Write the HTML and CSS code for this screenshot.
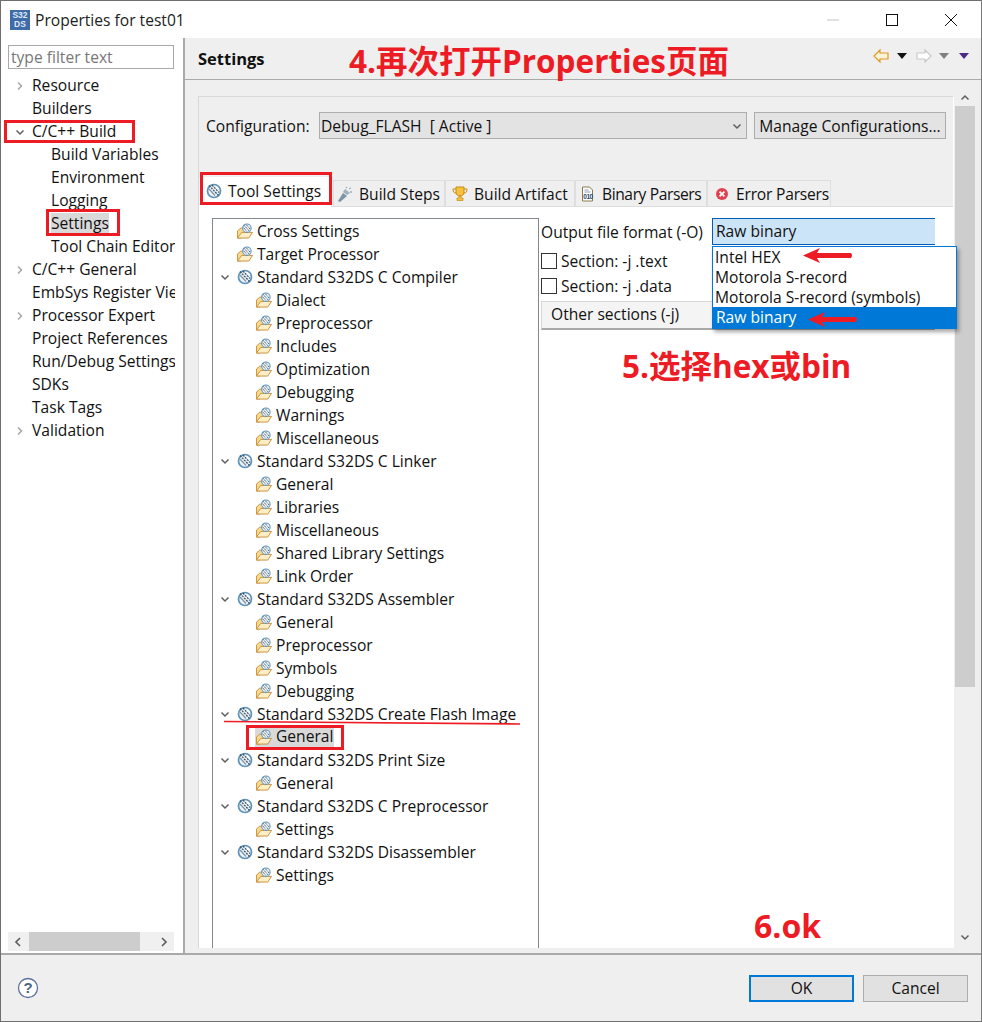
FILE: index.html
```html
<!DOCTYPE html>
<html lang="en">
<head>
    <meta charset="UTF-8">
    <meta name="viewport" content="width=device-width, initial-scale=1.0">
    <title>Properties for test01</title>
    <link rel="stylesheet" href="styles.css">
</head>
<body>
    <svg class="defs" width="0" height="0">
        <symbol id="tool" viewBox="0 0 16 16">
            <circle cx="8" cy="8" r="6.500" fill="#eef3f8" stroke="#5f93b8" stroke-width="1.700"/>
            <path d="M3 2.500l9.500 10M6 2l7 7.500" stroke="#3d5468" stroke-width="1.300" fill="none" stroke-dasharray="2 1"/>
            <path d="M3 6l6 6.500" stroke="#7d93a6" stroke-width="1.200" fill="none"/>
            <path d="M10 3.500l2.500 2.500" stroke="#fff" stroke-width="1.400"/>
        </symbol>
        <symbol id="folder" viewBox="0 0 17 16">
            <path d="M.5 8L4 5h6v3l-6 7.500H.5z" fill="#f9d98f" stroke="#c98f36"/>
            <path d="M.5 15.500L5 9.500h11.500L12.500 15.500z" fill="#fdeec6" stroke="#c98f36"/>
            <circle cx="10.500" cy="5" r="4.500" fill="#eef3f8" stroke="#5f93b8" stroke-width="1.100"/>
            <path d="M7.500 2l5.500 6M10 1.500l4 4.500M7 4.500l3.500 4" stroke="#3d5468" stroke-width="1" fill="none" stroke-dasharray="1.500 .7"/>
        </symbol>
        <symbol id="open" viewBox="0 0 10 10">
            <path d="M1.500 3.500L5 7l3.500-3.500" fill="none" stroke="#5f5f5f" stroke-width="1.500"/>
        </symbol>
        <symbol id="closed" viewBox="0 0 10 10">
            <path d="M3 1.500L6.500 5 3 8.500" fill="none" stroke="#a6a6a6" stroke-width="1.500"/>
        </symbol>
        <symbol id="right" viewBox="0 0 10 10">
            <path d="M3 1L7 5 3 9" fill="none" stroke="#5f5f5f" stroke-width="1.700"/>
        </symbol>
        <symbol id="left" viewBox="0 0 10 10">
            <path d="M7 1L3 5l4 4" fill="none" stroke="#5f5f5f" stroke-width="1.700"/>
        </symbol>
    </svg>

    <div class="dialog">
        <header class="titlebar">
            <div class="app-icon"><span>S32</span><span>DS</span></div>
            <span class="title">Properties for test01</span>
            <div class="win-btns">
                <svg width="12" height="12" viewBox="0 0 12 12"><path d="M0 6h12" stroke="#c4c4c4"/></svg>
                <svg width="12" height="12" viewBox="0 0 12 12"><rect x=".5" y=".5" width="11" height="11" fill="none" stroke="#111"/></svg>
                <svg width="12" height="12" viewBox="0 0 12 12"><path d="M0 0l12 12M12 0L0 12" stroke="#111"/></svg>
            </div>
        </header>

        <div class="main">
            <aside class="side">
                <input class="filter" type="text" placeholder="type filter text">
                <ul class="nav">
                    <li><svg class="chev"><use href="#closed"/></svg>Resource</li>
                    <li><span class="chev"></span>Builders</li>
                    <li><svg class="chev"><use href="#open"/></svg>C/C++ Build</li>
                    <li class="sub">Build Variables</li>
                    <li class="sub">Environment</li>
                    <li class="sub">Logging</li>
                    <li class="sub"><span class="picked">Settings</span></li>
                    <li class="sub">Tool Chain Editor</li>
                    <li><svg class="chev"><use href="#closed"/></svg>C/C++ General</li>
                    <li><span class="chev"></span>EmbSys Register View</li>
                    <li><svg class="chev"><use href="#closed"/></svg>Processor Expert</li>
                    <li><span class="chev"></span>Project References</li>
                    <li><span class="chev"></span>Run/Debug Settings</li>
                    <li><span class="chev"></span>SDKs</li>
                    <li><span class="chev"></span>Task Tags</li>
                    <li><svg class="chev"><use href="#closed"/></svg>Validation</li>
                </ul>
                <div class="hscroll">
                    <svg width="10" height="10"><use href="#left"/></svg>
                    <div class="hthumb"></div>
                    <svg width="10" height="10"><use href="#right"/></svg>
                </div>
            </aside>

            <section class="content">
                <div class="page-head">
                    <h2>Settings</h2>
                    <div class="history">
                        <svg width="16" height="14" viewBox="0 0 16 14"><path d="M7 1L1 7l6 6V10h8V4H7z" fill="#fdf3d8" stroke="#dd9a28" stroke-width="1.200"/></svg>
                        <i class="tri"></i>
                        <svg class="fwd" width="16" height="14" viewBox="0 0 16 14"><path d="M9 1l6 6-6 6V10H1V4h8z" fill="#fff" stroke="#c8c8c8" stroke-width="1.200"/></svg>
                        <i class="tri grey"></i>
                        <i class="tri purple"></i>
                    </div>
                </div>
                <div class="page-body">
                    <div class="pane">
                        <div class="config">
                            <label>Configuration:</label>
                            <div class="select">Debug_FLASH&nbsp; [ Active ]
                                <svg width="10" height="10"><use href="#open"/></svg>
                            </div>
                            <button class="manage">Manage Configurations...</button>
                        </div>
                        <div class="tabs">
                            <div class="tab active"><svg class="ic"><use href="#tool"/></svg>Tool Settings</div>
                            <div class="tab t-steps">
                                <svg class="ic" viewBox="0 0 16 16"><path d="M1 15l5-8 4 3-7 6z" fill="#7d93a6"/><path d="M6 6l2-3 5 4-3 2z" fill="#9fb0be"/><path d="M9 2l1-1M12 3l2-1M13 6l2 0" stroke="#9fb0be" stroke-width="1.300"/></svg>Build Steps</div>
                            <div class="tab t-artifact">
                                <svg class="ic" viewBox="0 0 16 16"><path d="M4 1h8v5c0 3-2 4-4 4s-4-1-4-4z" fill="#f6c23c" stroke="#c98a12"/><path d="M4 3H1c0 3 1 4 3 4M12 3h3c0 3-1 4-3 4" fill="none" stroke="#c98a12"/><path d="M7 10h2v2h2v2.500H5V12h2z" fill="#f6c23c" stroke="#c98a12" stroke-width=".7"/></svg>Build Artifact</div>
                            <div class="tab t-binary">
                                <svg class="ic" viewBox="0 0 16 16"><path d="M2.500 1h7l3 3v11h-10z" fill="#fff" stroke="#8d7a4c"/><path d="M4.500 4h4M4.500 6h6" stroke="#8aa0b8"/><text x="8" y="13" text-anchor="middle" class="bin-text">010</text></svg>Binary Parsers</div>
                            <div class="tab t-error">
                                <svg class="ic" viewBox="0 0 16 16"><circle cx="8" cy="8" r="6" fill="#e0424f"/><path d="M5.600 5.600l4.800 4.800M10.400 5.600l-4.800 4.800" stroke="#fff" stroke-width="1.700"/></svg>Error Parsers</div>
                        </div>
                        <div class="tab-panel">
                            <ul class="tool-tree">
                                <li class="leaf"><svg class="ic"><use href="#folder"/></svg>Cross Settings</li>
                                <li class="leaf"><svg class="ic"><use href="#folder"/></svg>Target Processor</li>
                                <li class="group"><svg class="arrow"><use href="#open"/></svg><svg class="ic"><use href="#tool"/></svg>Standard S32DS C Compiler</li>
                                <li class="item"><svg class="ic"><use href="#folder"/></svg>Dialect</li>
                                <li class="item"><svg class="ic"><use href="#folder"/></svg>Preprocessor</li>
                                <li class="item"><svg class="ic"><use href="#folder"/></svg>Includes</li>
                                <li class="item"><svg class="ic"><use href="#folder"/></svg>Optimization</li>
                                <li class="item"><svg class="ic"><use href="#folder"/></svg>Debugging</li>
                                <li class="item"><svg class="ic"><use href="#folder"/></svg>Warnings</li>
                                <li class="item"><svg class="ic"><use href="#folder"/></svg>Miscellaneous</li>
                                <li class="group"><svg class="arrow"><use href="#open"/></svg><svg class="ic"><use href="#tool"/></svg>Standard S32DS C Linker</li>
                                <li class="item"><svg class="ic"><use href="#folder"/></svg>General</li>
                                <li class="item"><svg class="ic"><use href="#folder"/></svg>Libraries</li>
                                <li class="item"><svg class="ic"><use href="#folder"/></svg>Miscellaneous</li>
                                <li class="item"><svg class="ic"><use href="#folder"/></svg>Shared Library Settings</li>
                                <li class="item"><svg class="ic"><use href="#folder"/></svg>Link Order</li>
                                <li class="group"><svg class="arrow"><use href="#open"/></svg><svg class="ic"><use href="#tool"/></svg>Standard S32DS Assembler</li>
                                <li class="item"><svg class="ic"><use href="#folder"/></svg>General</li>
                                <li class="item"><svg class="ic"><use href="#folder"/></svg>Preprocessor</li>
                                <li class="item"><svg class="ic"><use href="#folder"/></svg>Symbols</li>
                                <li class="item"><svg class="ic"><use href="#folder"/></svg>Debugging</li>
                                <li class="group"><svg class="arrow"><use href="#open"/></svg><svg class="ic"><use href="#tool"/></svg>Standard S32DS Create Flash Image</li>
                                <li class="item selected"><span class="picked"><svg class="ic"><use href="#folder"/></svg>General</span></li>
                                <li class="group"><svg class="arrow"><use href="#open"/></svg><svg class="ic"><use href="#tool"/></svg>Standard S32DS Print Size</li>
                                <li class="item"><svg class="ic"><use href="#folder"/></svg>General</li>
                                <li class="group"><svg class="arrow"><use href="#open"/></svg><svg class="ic"><use href="#tool"/></svg>Standard S32DS C Preprocessor</li>
                                <li class="item"><svg class="ic"><use href="#folder"/></svg>Settings</li>
                                <li class="group"><svg class="arrow"><use href="#open"/></svg><svg class="ic"><use href="#tool"/></svg>Standard S32DS Disassembler</li>
                                <li class="item"><svg class="ic"><use href="#folder"/></svg>Settings</li>
                            </ul>
                            <div class="options">
                                <div class="format-row">
                                    <span class="format-label">Output file format (-O)</span>
                                    <div class="combo">Raw binary</div>
                                </div>
                                <label class="check"><i class="box"></i>Section: -j .text</label>
                                <label class="check second"><i class="box"></i>Section: -j .data</label>
                                <div class="other-head">Other sections (-j)</div>
                                <div class="other-body"></div>
                            </div>
                        </div>
                    </div>
                    <div class="vscroll">
                        <svg width="10" height="10" class="up"><use href="#open"/></svg>
                        <div class="vthumb"></div>
                        <svg width="10" height="10"><use href="#open"/></svg>
                    </div>
                </div>
            </section>
        </div>

        <footer class="footer">
            <svg width="22" height="22" viewBox="0 0 22 22"><circle cx="11" cy="11" r="9.500" fill="#fff" stroke="#5c739c" stroke-width="1.300"/><text x="11" y="16" text-anchor="middle" class="help-q">?</text></svg>
            <div class="actions">
                <button class="btn default">OK</button>
                <button class="btn">Cancel</button>
            </div>
        </footer>

        <!-- dropdown list, open over the form -->
        <ul class="dropdown">
            <li>Intel HEX</li>
            <li>Motorola S-record</li>
            <li>Motorola S-record (symbols)</li>
            <li class="on">Raw binary</li>
        </ul>

        <!-- red notes drawn on top of the screenshot -->
        <div class="note note4">4.再次打开Properties页面</div>
        <div class="note note5">5.选择hex或bin</div>
        <div class="note note6">6.ok</div>
        <div class="mark m-build"></div>
        <div class="mark m-settings"></div>
        <div class="mark m-tool"></div>
        <div class="mark m-general"></div>
        <svg class="underline" width="298" height="6"><path d="M0 1.500L296 4" stroke="#ed1c24" stroke-width="1.600"/></svg>
        <svg class="red-arrow a1" width="50" height="15" viewBox="0 0 50 15"><path d="M0 7.500L17 0l-3 5h34q2 2.500 0 5H14l3 5z" fill="#ed1c24"/></svg>
        <svg class="red-arrow a2" width="50" height="15" viewBox="0 0 50 15"><path d="M0 7.500L17 0l-3 5h34q2 2.500 0 5H14l3 5z" fill="#ed1c24"/></svg>
    </div>
</body>
</html>
```

FILE: styles.css
```css
* {
    box-sizing: border-box;
}
html, body {
    margin: 0;
    padding: 0;
}
body {
    font-family: "Open Sans", "Noto Sans", sans-serif;
    font-size: 15.6px;
    color: #111;
    background: #fff;
}
ul {
    list-style: none;
    margin: 0;
    padding: 0;
}
.defs {
    position: absolute;
}
.dialog {
    position: relative;
    width: 982px;
    height: 1022px;
    border: 1px solid #6f6f6f;
    border-right-color: #7a7a7a;
    display: flex;
    flex-direction: column;
    overflow: hidden;
    background: #fff;
}

/* Title bar */
.titlebar {
    height: 37px;
    display: flex;
    align-items: center;
    padding-left: 9px;
    flex: none;
}
.app-icon {
    width: 20px;
    height: 20px;
    background: #3f6ba8;
    color: #dfe8f5;
    font-family: "Liberation Sans", sans-serif;
    font-size: 8.500px;
    font-weight: bold;
    line-height: 9px;
    display: flex;
    flex-direction: column;
    align-items: center;
    justify-content: center;
    margin-right: 5px;
}
.title {
    color: #222;
}
.win-btns {
    margin-left: auto;
    display: flex;
    gap: 47px;
    padding-right: 24px;
}

.main {
    flex: 1;
    min-height: 0;
    display: flex;
}

/* Left navigation */
.side {
    width: 184px;
    flex: none;
    border-right: 2px solid #a9a9a9;
    padding: 7px 0 0 7px;
    display: flex;
    flex-direction: column;
    position: relative;
    overflow: hidden;
}
.filter {
    width: 166px;
    height: 24px;
    border: 1px solid #a9a9a9;
    padding: 0 2px;
    font-family: inherit;
    font-size: 15.6px;
    outline: none;
}
.filter::placeholder {
    color: #777;
}
.nav {
    margin-top: 5px;
    width: 167px;
    overflow: hidden;
    flex: 1;
}
.nav li {
    height: 23px;
    line-height: 23px;
    display: flex;
    align-items: center;
    white-space: nowrap;
    padding-left: 7px;
}
.nav .chev {
    width: 10px;
    height: 10px;
    flex: none;
    margin-right: 7px;
}
.nav .sub {
    padding-left: 43px;
}
.picked {
    background: #d9d9d9;
    display: inline-flex;
    align-items: center;
    line-height: 21px;
}
.hscroll {
    width: 166px;
    height: 19px;
    margin-bottom: 2px;
    background: #f0f0f0;
    display: flex;
    align-items: center;
    padding: 0 5px;
}
.hscroll svg {
    flex: none;
}
.hthumb {
    width: 111px;
    height: 19px;
    background: #cdcdcd;
    margin: 0 19px 0 6px;
}

/* Right side */
.content {
    flex: 1;
    min-width: 0;
    display: flex;
    flex-direction: column;
    background: #efefef;
}
.page-head {
    height: 42px;
    flex: none;
    display: flex;
    align-items: center;
    border-bottom: 1px solid #a9a9a9;
    padding: 0 12px 0 13px;
}
.page-head h2 {
    margin: 0;
    font-size: 16.500px;
    font-weight: 700;
}
.history {
    margin-left: auto;
    display: flex;
    align-items: center;
    margin-top: -5px;
}
.history .fwd {
    margin-left: 9px;
}
.tri {
    width: 0;
    height: 0;
    margin-left: 8px;
    border-left: 5px solid transparent;
    border-right: 5px solid transparent;
    border-top: 6px solid #111;
}
.tri.grey {
    border-top-color: #808080;
    margin-left: 7px;
}
.tri.purple {
    border-top-color: #4b2a87;
    margin-left: 10px;
}
.page-body {
    flex: 1;
    min-height: 0;
    display: flex;
    overflow: hidden;
}
.pane {
    width: 756px;
    flex: none;
    margin: 16px 0 5px 13px;
    border-top: 1px solid #d8d8d8;
    border-left: 1px solid #d8d8d8;
    border-right: 1px solid #fff;
    display: flex;
    flex-direction: column;
    overflow: hidden;
}

.config {
    display: flex;
    align-items: center;
    height: 27px;
    margin-top: 15px;
    padding-left: 7px;
}
.config label {
    width: 113px;
    white-space: nowrap;
}
.select {
    width: 428px;
    height: 27px;
    background: #e3e3e3;
    border: 1px solid #adadad;
    padding: 0 4px 0 1px;
    line-height: 24px;
    display: flex;
    align-items: center;
    justify-content: space-between;
}
.manage {
    margin-left: 7px;
    width: 192px;
    height: 27px;
    background: #e3e3e3;
    border: 1px solid #adadad;
    font-family: inherit;
    font-size: 15.6px;
    color: #111;
    padding: 0;
    white-space: nowrap;
}

/* Tabs */
.tabs {
    margin-top: 36px;
    height: 31px;
    display: flex;
    align-items: flex-end;
    flex: none;
    position: relative;
    z-index: 1;
}
.tab {
    height: 26px;
    flex: none;
    display: flex;
    align-items: center;
    gap: 6px;
    padding: 0 0 0 3px;
    background: #efefef;
    border: 1px solid #dedede;
    border-bottom: none;
    white-space: nowrap;
}
.tab.active {
    height: 30px;
    margin-bottom: -1px;
    background: #fff;
    border-color: #fff;
    padding: 0 0 4px 6px;
    margin-right: 2px;
    width: 132px;
}
.t-steps {
    width: 112px;
}
.t-artifact {
    width: 130px;
    padding-left: 6px;
}
.t-binary {
    width: 132px;
    padding-left: 4px;
    letter-spacing: -.4px;
}
.t-error {
    width: 124px;
    padding-left: 6px;
    letter-spacing: -.2px;
}
.ic {
    width: 16px;
    height: 16px;
    flex: none;
}
.bin-text {
    font-family: "Liberation Sans", sans-serif;
    font-size: 6.500px;
    font-weight: bold;
    fill: #2b4a73;
}
.tab-panel {
    flex: 1;
    min-height: 0;
    background: #fff;
    border-top: 1px solid #dedede;
    padding: 11px 0 0 13px;
    display: flex;
    align-items: stretch;
}

/* Tool tree */
.tool-tree {
    width: 327px;
    flex: none;
    border: 1px solid #828790;
    border-bottom: none;
    overflow: hidden;
}
.tool-tree li {
    height: 23px;
    display: flex;
    align-items: center;
    white-space: nowrap;
    gap: 4px;
}
.tool-tree .leaf {
    padding-left: 24px;
}
.tool-tree .item {
    padding-left: 43px;
}
.tool-tree .group {
    padding-left: 7px;
    gap: 0;
}
.tool-tree .group .ic {
    margin-left: 7px;
    margin-right: 4px;
}
.arrow {
    width: 10px;
    height: 10px;
    flex: none;
}
.tool-tree .picked {
    gap: 4px;
    margin-left: -1px;
    padding-left: 1px;
    padding-right: 1px;
}

.options {
    flex: 1;
    min-width: 0;
    padding-left: 2px;
    display: flex;
    flex-direction: column;
}
.format-row {
    display: flex;
    align-items: center;
    height: 27px;
    width: 394px;
    margin-bottom: 3px;
}
.format-label {
    width: 171px;
    flex: none;
    white-space: nowrap;
}
.combo {
    flex: 1;
    height: 27px;
    background: #cce4f7;
    border: 1px solid #005fb3;
    border-right: none;
    padding-left: 3px;
    line-height: 25px;
}
.check {
    display: flex;
    align-items: center;
    height: 25px;
    gap: 4px;
}
.box {
    width: 16px;
    height: 16px;
    background: #fff;
    border: 1px solid #333;
}
.other-head {
    width: 394px;
    height: 29px;
    margin-top: 3px;
    border: 1px solid #d8d8d8;
    border-bottom: 2px solid #a9a9a9;
    background: #f4f4f4;
    padding-left: 9px;
    line-height: 25px;
    flex: none;
}
.other-body {
    flex: 1;
}

/* Vertical scrollbar */
.vscroll {
    width: 20px;
    flex: none;
    margin: 9px 0 5px 1px;
    display: flex;
    flex-direction: column;
    align-items: center;
    padding: 4px 0 6px;
}
.vscroll svg {
    flex: none;
}
.vscroll .up {
    transform: rotate(180deg);
}
.vthumb {
    width: 20px;
    height: 581px;
    background: #cdcdcd;
    margin: 3px 0 auto;
}

/* Footer */
.footer {
    height: 68px;
    flex: none;
    border-top: 2px solid #a9a9a9;
    background: #efefef;
    display: flex;
    align-items: center;
    padding: 0 13px 0 16px;
}
.help-q {
    font-family: "Liberation Sans", sans-serif;
    font-size: 15px;
    font-weight: 700;
    fill: #4c638c;
}
.actions {
    margin-left: auto;
    display: flex;
    gap: 9px;
}
.btn {
    width: 105px;
    height: 27px;
    background: #e1e1e1;
    border: 1px solid #adadad;
    font-family: inherit;
    font-size: 15.6px;
    color: #111;
    padding: 0;
}
.btn.default {
    border: 2px solid #0078d7;
}

/* Dropdown over the combo */
.dropdown {
    position: absolute;
    left: 711px;
    top: 245px;
    width: 245px;
    height: 83px;
    background: #fff;
    border: 1px solid #0078d7;
    box-shadow: 2px 3px 4px rgba(0, 0, 0, .35);
    z-index: 2;
}
.dropdown li {
    height: 20px;
    line-height: 20px;
    padding-left: 2px;
    white-space: nowrap;
}
.dropdown .on {
    background: #0078d7;
    color: #fff;
    height: 21px;
    padding-left: 3px;
}

/* Red notes */
.note {
    position: absolute;
    z-index: 3;
    color: #ed1c24;
    font-family: "Open Sans", "Noto Sans CJK SC", sans-serif;
    font-weight: 700;
    font-size: 31.500px;
    line-height: 40px;
    white-space: nowrap;
}
.note4 {
    left: 348px;
    top: 40px;
}
.note5 {
    left: 621px;
    top: 345px;
}
.note6 {
    left: 753px;
    top: 905px;
    font-size: 32px;
}
.mark {
    position: absolute;
    z-index: 3;
    border: 3px solid #ed1c24;
}
.m-build {
    left: 3px;
    top: 119px;
    width: 131px;
    height: 23px;
}
.m-settings {
    left: 45px;
    top: 208px;
    width: 74px;
    height: 27px;
}
.m-tool {
    left: 199px;
    top: 171px;
    width: 132px;
    height: 33px;
}
.m-general {
    left: 245px;
    top: 724px;
    width: 98px;
    height: 25px;
}
.underline {
    position: absolute;
    z-index: 3;
    left: 223px;
    top: 719px;
}
.red-arrow {
    position: absolute;
    z-index: 3;
}
.a1 {
    left: 802px;
    top: 247px;
}
.a2 {
    left: 807px;
    top: 311px;
}
```
